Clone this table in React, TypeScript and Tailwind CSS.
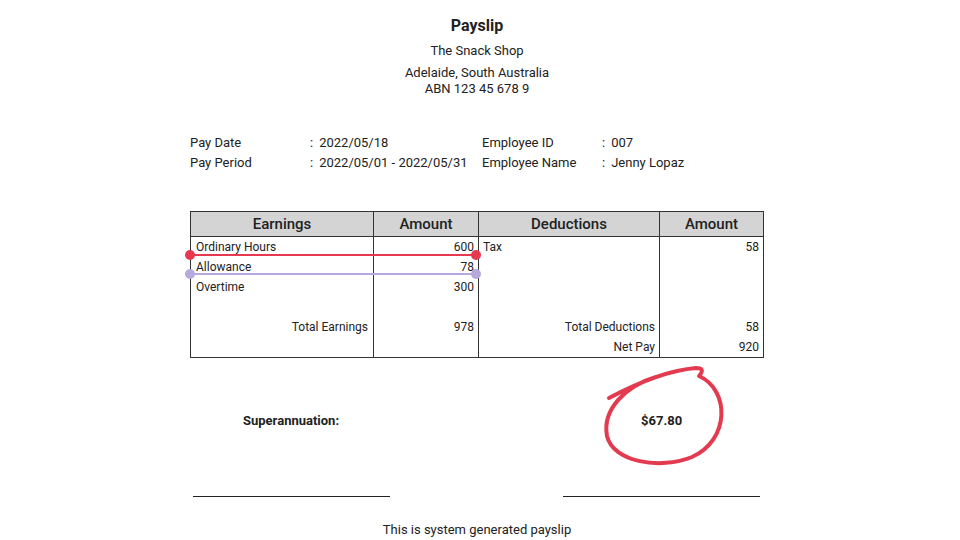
import React from "react";

const earnings = [
    { label: "Ordinary Hours", amount: "600" },
    { label: "Allowance", amount: "78" },
    { label: "Overtime", amount: "300" },
    { label: "", amount: "" },
    { label: "Total Earnings", amount: "978", total: true },
    { label: "", amount: "" },
];

const deductions = [
    { label: "Tax", amount: "58" },
    { label: "", amount: "" },
    { label: "", amount: "" },
    { label: "", amount: "" },
    { label: "Total Deductions", amount: "58", total: true },
    { label: "Net Pay", amount: "920", total: true },
];

function InfoRow({ a, b, c, d }: { a: string; b: string; c: string; d: string }) {
    return (
        <div className="flex h-5 items-center">
            <div className="w-[120px]">{a}</div>
            <div className="w-[172px]">
                <span className="mr-[6px]">:</span>
                {b}
            </div>
            <div className="w-[120px]">{c}</div>
            <div>
                <span className="mr-[6px]">:</span>
                {d}
            </div>
        </div>
    );
}

export default function App() {
    return (
        <div className="relative h-[540px] w-[960px] overflow-hidden bg-white text-[#222] [font-family:Roboto,'Liberation_Sans',sans-serif]">
            <div className="ml-[190px] w-[574px]">
                {/* header */}
                <div className="flex flex-col items-center pt-[16px]">
                    <div className="text-[16px] font-bold leading-5">Payslip</div>
                    <div className="mt-[5px] text-[13px] leading-5">The Snack Shop</div>
                    <div className="mt-[4px] text-[13px] leading-4">Adelaide, South Australia</div>
                    <div className="text-[13px] leading-4">ABN 123 45 678 9</div>
                </div>

                {/* employee info */}
                <div className="mt-[36px] text-[13px]">
                    <InfoRow a="Pay Date" b="2022/05/18" c="Employee ID" d="007" />
                    <InfoRow a="Pay Period" b="2022/05/01 - 2022/05/31" c="Employee Name" d="Jenny Lopaz" />
                </div>

                {/* table */}
                <div className="mt-[38px] flex border border-[#333]">
                    <div className="w-[183px] border-r border-[#333]">
                        <div className="flex h-[25px] items-center justify-center border-b border-[#333] bg-[#d4d4d4] text-[15px] font-medium">Earnings</div>
                        {earnings.map((r, i) => (
                            <div key={i} className={`flex h-5 items-center px-[5px] text-[12px] ${r.total ? "justify-end" : ""}`}>
                                {r.label}
                            </div>
                        ))}
                    </div>
                    <div className="w-[105px] border-r border-[#333]">
                        <div className="flex h-[25px] items-center justify-center border-b border-[#333] bg-[#d4d4d4] text-[15px] font-medium">Amount</div>
                        {earnings.map((r, i) => (
                            <div key={i} className="flex h-5 items-center justify-end px-[4px] text-[12px]">
                                {r.amount}
                            </div>
                        ))}
                    </div>
                    <div className="w-[181px] border-r border-[#333]">
                        <div className="flex h-[25px] items-center justify-center border-b border-[#333] bg-[#d4d4d4] text-[15px] font-medium">Deductions</div>
                        {deductions.map((r, i) => (
                            <div key={i} className={`flex h-5 items-center px-[4px] text-[12px] ${r.total ? "justify-end" : ""}`}>
                                {r.label}
                            </div>
                        ))}
                    </div>
                    <div className="flex-1">
                        <div className="flex h-[25px] items-center justify-center border-b border-[#333] bg-[#d4d4d4] text-[15px] font-medium">Amount</div>
                        {deductions.map((r, i) => (
                            <div key={i} className="flex h-5 items-center justify-end px-[4px] text-[12px]">
                                {r.amount}
                            </div>
                        ))}
                    </div>
                </div>

                {/* superannuation */}
                <div className="mt-[53px] flex h-5 items-center text-[13px] font-bold">
                    <div className="ml-[53px]">Superannuation:</div>
                    <div className="ml-[302px]">$67.80</div>
                </div>

                {/* signatures */}
                <div className="mt-[65px] flex justify-between px-[3px]">
                    <div className="w-[197px] border-b border-[#222]" />
                    <div className="mr-[1px] w-[197px] border-b border-[#222]" />
                </div>

                <div className="mt-[23px] text-center text-[13px]">This is system generated payslip</div>
            </div>

            {/* annotations */}
            <svg className="pointer-events-none absolute left-0 top-0" width="960" height="540" viewBox="0 0 960 540">
                <line x1="190" y1="255" x2="476" y2="255" stroke="#e8384f" strokeWidth="2" />
                <circle cx="190" cy="255" r="5" fill="#e8384f" />
                <circle cx="476" cy="255" r="5" fill="#e8384f" />
                <line x1="190" y1="274" x2="476" y2="274" stroke="#b8a9dd" strokeWidth="2" />
                <circle cx="190" cy="274" r="5" fill="#b8a9dd" />
                <circle cx="476" cy="274" r="5" fill="#b8a9dd" />
                <path
                    d="M 609 398 Q 660 371 696 368 Q 706 368 699 376 C 730 390 730 440 692 457 C 660 470 613 462 607 436 C 602 410 625 386 656 377"
                    fill="none"
                    stroke="#e33a4f"
                    strokeWidth="4"
                    strokeLinecap="round"
                    strokeLinejoin="round"
                />
            </svg>
        </div>
    );
}
